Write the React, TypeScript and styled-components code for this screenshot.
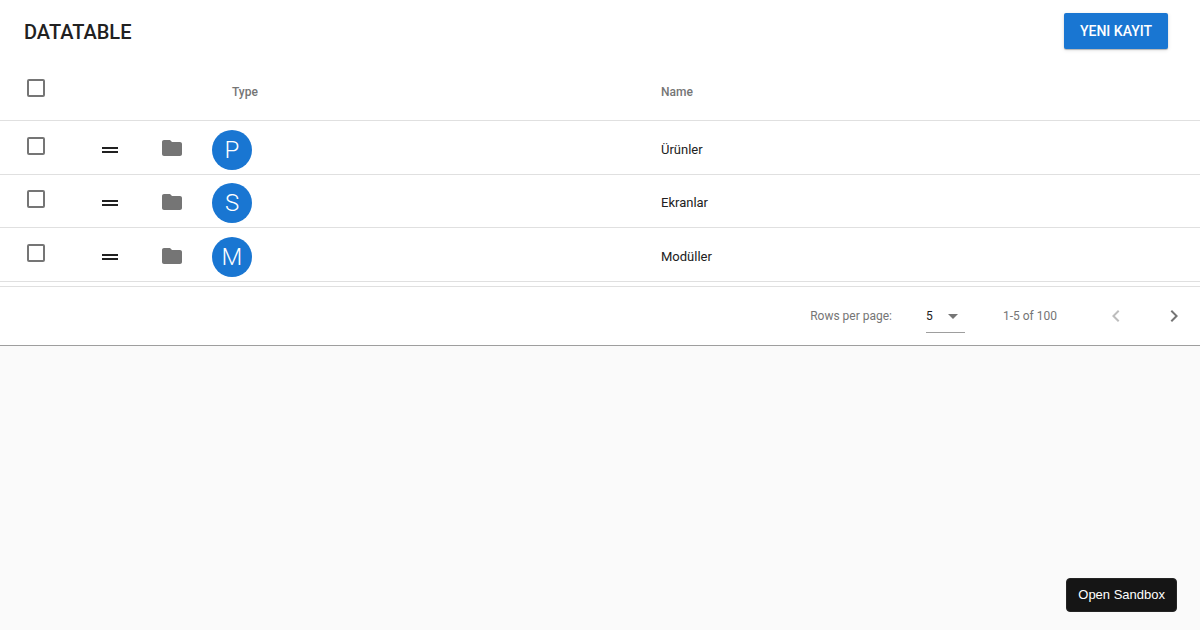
import React from "react";
import styled, { createGlobalStyle } from "styled-components";

const GlobalStyle = createGlobalStyle`
  *, *::before, *::after { box-sizing: border-box; }
  body {
    margin: 0;
    background: #fafafa;
    color: #212121;
    font-family: Roboto, sans-serif;
    font-size: 13px;
  }
  button, select, input { font: inherit; margin: 0; }
`;

const Card = styled.main`
  background: #fff;
  border-bottom: 1px solid #9e9e9e;
  box-shadow: 0 1px 2px 0 rgba(0, 0, 0, 0.2);
`;

const CardHeader = styled.header`
  display: flex;
  align-items: center;
  justify-content: space-between;
  height: 64px;
  padding: 0 32px 2px 24px;
`;

const Title = styled.h1`
  margin: 0;
  padding-top: 2px;
  font-size: 20px;
  font-weight: 500;
  line-height: 28px;
`;

const PrimaryButton = styled.button`
  height: 36px;
  padding: 0 16px;
  border: 0;
  border-radius: 2px;
  background: #1976d2;
  color: #fff;
  font-size: 14px;
  font-weight: 500;
  cursor: pointer;
  box-shadow: 0 1px 1px 0 rgba(0, 0, 0, 0.24), 0 1px 4px 0 rgba(0, 0, 0, 0.12);
`;

const Table = styled.table`
  width: 100%;
  table-layout: fixed;
  border-collapse: separate;
  border-spacing: 0;
`;

const Col = styled.col<{ $width?: string }>`
  width: ${(p) => p.$width ?? "auto"};
`;

const HeaderCell = styled.th<{ $indent?: number }>`
  height: 57px;
  padding: 0 0 0 ${(p) => p.$indent ?? 0}px;
  border-bottom: 1px solid #e0e0e0;
  color: #757575;
  font-size: 12px;
  font-weight: 500;
  text-align: left;
  vertical-align: middle;
`;

const Body = styled.tbody`
  height: 161px;
`;

const Cell = styled.td<{ $indent?: number }>`
  padding: 0 0 0 ${(p) => p.$indent ?? 0}px;
  border-bottom: 1px solid #e0e0e0;
  line-height: 16px;
  vertical-align: middle;
`;

const Lowered = styled.div`
  display: flex;
  align-items: center;
  padding-top: 5px;
`;

const CheckLabel = styled.label<{ $raise: number }>`
  display: flex;
  padding-bottom: ${(p) => p.$raise}px;
`;

const Checkbox = styled.input`
  appearance: none;
  width: 18px;
  height: 18px;
  border: 2px solid #757575;
  border-radius: 2px;
  background: #fff;
  cursor: pointer;
  &:checked { background: #1976d2; border-color: #1976d2; }
`;

const Icon = styled.svg`
  display: block;
  width: 24px;
  height: 24px;
  fill: currentColor;
`;

const FolderIcon = styled(Icon)`
  margin-top: 2px;
  color: #757575;
`;

const DragHandle = styled.button`
  padding: 0;
  border: 0;
  background: none;
  color: #212121;
  cursor: move;
`;

const Avatar = styled.div`
  width: 40px;
  height: 40px;
  border-radius: 50%;
  background: #1976d2;
  color: #fff;
  font-size: 24px;
  font-weight: 300;
  line-height: 40px;
  text-align: center;
`;

const Pagination = styled.footer`
  display: flex;
  align-items: center;
  justify-content: flex-end;
  height: 59px;
  margin-top: 4px;
  padding-right: 14px;
  border-top: 1px solid #e0e0e0;
  color: #757575;
  font-size: 12px;
`;

const SelectField = styled.div`
  display: grid;
  align-items: center;
  justify-items: end;
  width: 39px;
  height: 34px;
  margin: 0 38px 0 34px;
  border-bottom: 1px solid #9e9e9e;
  & > * { grid-area: 1 / 1; }
  svg { pointer-events: none; }
`;

const Select = styled.select`
  appearance: none;
  width: 100%;
  height: 32px;
  padding: 0;
  border: 0;
  background: transparent;
  color: #212121;
  cursor: pointer;
`;

const PageButton = styled.button`
  padding: 0;
  border: 0;
  margin-left: 34px;
  background: none;
  color: #757575;
  cursor: pointer;
  &:disabled { color: #bdbdbd; cursor: default; }
`;

const PageRange = styled.span`
  margin-right: 13px;
`;

const SandboxButton = styled.button`
  position: fixed;
  right: 23px;
  bottom: 18px;
  height: 34px;
  padding: 0 11px 2px;
  border: 1px solid #242424;
  border-radius: 4px;
  background: #151515;
  color: #fff;
  font-family: "Liberation Sans", Arial, sans-serif;
  font-size: 13px;
  cursor: pointer;
`;

const rows = [
  { letter: "P", name: "Ürünler" },
  { letter: "S", name: "Ekranlar" },
  { letter: "M", name: "Modüller" },
];

function SelectBox({ label, raise = 3 }: { label: string; raise?: number }) {
  return (
    <CheckLabel $raise={raise}>
      <Checkbox type="checkbox" aria-label={label} />
    </CheckLabel>
  );
}

export default function App() {
  return (
    <>
      <GlobalStyle />
      <Card>
        <CardHeader>
          <Title>DATATABLE</Title>
          <PrimaryButton type="button">YENI KAYIT</PrimaryButton>
        </CardHeader>
        <Table>
          <colgroup>
            <Col $width="72px" />
            <Col $width="64px" />
            <Col $width="64px" />
            <Col $width="37%" />
            <Col />
          </colgroup>
          <thead>
            <tr>
              <HeaderCell $indent={27}>
                <SelectBox label="Select all rows" raise={8} />
              </HeaderCell>
              <HeaderCell />
              <HeaderCell />
              <HeaderCell $indent={32}>Type</HeaderCell>
              <HeaderCell $indent={17}>Name</HeaderCell>
            </tr>
          </thead>
          <Body>
            {rows.map((row) => (
              <tr key={row.letter}>
                <Cell $indent={27}>
                  <SelectBox label={"Select " + row.name} />
                </Cell>
                <Cell $indent={26}>
                  <Lowered>
                    <DragHandle type="button" aria-label={"Move " + row.name}>
                      <Icon viewBox="0 0 24 24">
                        <path d="M20 9H4v2h16V9zM4 15h16v-2H4v2z" />
                      </Icon>
                    </DragHandle>
                  </Lowered>
                </Cell>
                <Cell $indent={24}>
                  <FolderIcon viewBox="0 0 24 24">
                    <path d="M10 4H4c-1.1 0-1.99.9-1.99 2L2 18c0 1.1.9 2 2 2h16c1.1 0 2-.9 2-2V8c0-1.1-.9-2-2-2h-8l-2-2z" />
                  </FolderIcon>
                </Cell>
                <Cell $indent={12}>
                  <Lowered>
                    <Avatar>{row.letter}</Avatar>
                  </Lowered>
                </Cell>
                <Cell $indent={17}>
                  <Lowered>{row.name}</Lowered>
                </Cell>
              </tr>
            ))}
          </Body>
        </Table>
        <Pagination>
          <label htmlFor="rows-per-page">Rows per page:</label>
          <SelectField>
            <Select id="rows-per-page" defaultValue="5">
              <option>5</option>
              <option>10</option>
              <option>25</option>
            </Select>
            <Icon viewBox="0 0 24 24">
              <path d="M7 10l5 5 5-5z" />
            </Icon>
          </SelectField>
          <PageRange>1-5 of 100</PageRange>
          <PageButton type="button" disabled aria-label="Previous page">
            <Icon viewBox="0 0 24 24">
              <path d="M15.41 7.41L14 6l-6 6 6 6 1.41-1.41L10.83 12z" />
            </Icon>
          </PageButton>
          <PageButton type="button" aria-label="Next page">
            <Icon viewBox="0 0 24 24">
              <path d="M10 6L8.59 7.41 13.17 12l-4.58 4.59L10 18l6-6z" />
            </Icon>
          </PageButton>
        </Pagination>
      </Card>
      <SandboxButton type="button">Open Sandbox</SandboxButton>
    </>
  );
}
